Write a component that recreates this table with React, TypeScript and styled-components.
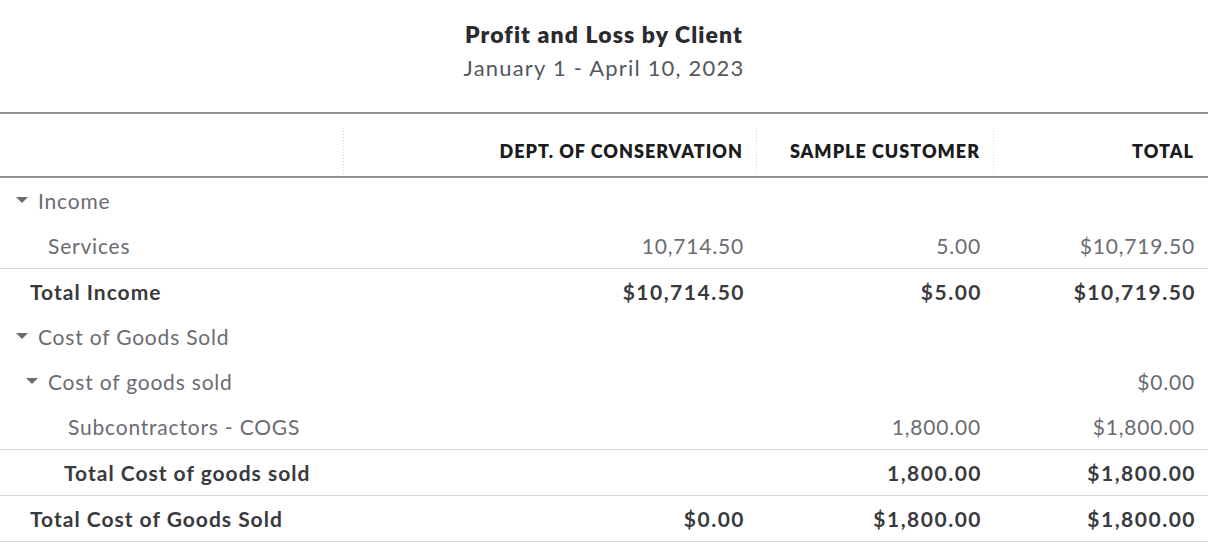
import React from "react";
import styled, { createGlobalStyle } from "styled-components";

const GlobalStyle = createGlobalStyle`
  body {
    margin: 0;
    background: #fff;
    font-family: Lato, "Open Sans", sans-serif;
  }
`;

const Page = styled.div`
  width: 1208px;
  padding-top: 20px;
`;

const Header = styled.div`
  display: flex;
  flex-direction: column;
  align-items: center;
  gap: 6px;
  margin-bottom: 30px;
`;

const Title = styled.h1`
  margin: 0;
  font-size: 23px;
  line-height: 28px;
  font-weight: 800;
  letter-spacing: 1.1px;
  color: #2a2b2e;
`;

const Subtitle = styled.div`
  font-size: 22px;
  line-height: 28px;
  letter-spacing: 1.2px;
  color: #55575c;
`;

const Grid = styled.div`
  display: grid;
  grid-template-columns: 344px 413px 237px 214px;
  border-top: 2px solid #8d9096;
`;

const HeadCell = styled.div<{ $divider?: boolean }>`
  height: 64px;
  box-sizing: border-box;
  padding-top: 12px;
  display: flex;
  align-items: center;
  justify-content: flex-end;
  padding-right: 14px;
  font-size: 18px;
  font-weight: 800;
  letter-spacing: 1px;
  color: #1b1c1e;
  border-bottom: 2px solid #8d9096;
  background-image: ${(p) =>
    p.$divider
      ? "repeating-linear-gradient(to bottom, #d3d6da 0 1px, transparent 1px 3px)"
      : "none"};
  background-size: 1px calc(100% - 14px);
  background-position: right bottom;
  background-repeat: no-repeat;
`;

const Row = styled.div<{ $line?: boolean }>`
  display: contents;
  & > div {
    height: ${(p) => (p.$line ? 45 : 44)}px;
    border-bottom: ${(p) => (p.$line ? "1px solid #d4d7dc" : "1px solid transparent")};
  }
`;

const Label = styled.div<{ $indent: number; $bold?: boolean }>`
  display: flex;
  align-items: center;
  padding-left: ${(p) => p.$indent}px;
  font-size: 21px;
  letter-spacing: ${(p) => (p.$bold ? "1px" : "0.8px")};
  font-weight: ${(p) => (p.$bold ? 700 : 400)};
  color: ${(p) => (p.$bold ? "#393a3d" : "#6b6c72")};
  white-space: nowrap;
`;

const Num = styled.div<{ $bold?: boolean }>`
  display: flex;
  align-items: center;
  justify-content: flex-end;
  padding-right: ${(p) => (p.$bold ? 12 : 13)}px;
  font-size: 21px;
  letter-spacing: ${(p) => (p.$bold ? "1.5px" : "0.8px")};
  font-weight: ${(p) => (p.$bold ? 700 : 400)};
  color: ${(p) => (p.$bold ? "#393a3d" : "#6b6c72")};
`;

const Caret = styled.span`
  width: 0;
  height: 0;
  border-left: 6px solid transparent;
  border-right: 6px solid transparent;
  border-top: 6px solid #6b6c72;
  margin-right: 10px;
`;

type Line = {
  label: string;
  indent: number;
  caret?: boolean;
  bold?: boolean;
  line?: boolean;
  values: string[];
};

const lines: Line[] = [
  { label: "Income", indent: 16, caret: true, values: ["", "", ""] },
  { label: "Services", indent: 48, line: true, values: ["10,714.50", "5.00", "$10,719.50"] },
  { label: "Total Income", indent: 30, bold: true, values: ["$10,714.50", "$5.00", "$10,719.50"] },
  { label: "Cost of Goods Sold", indent: 16, caret: true, values: ["", "", ""] },
  { label: "Cost of goods sold", indent: 26, caret: true, values: ["", "", "$0.00"] },
  { label: "Subcontractors - COGS", indent: 68, line: true, values: ["", "1,800.00", "$1,800.00"] },
  { label: "Total Cost of goods sold", indent: 64, bold: true, line: true, values: ["", "1,800.00", "$1,800.00"] },
  { label: "Total Cost of Goods Sold", indent: 30, bold: true, line: true, values: ["$0.00", "$1,800.00", "$1,800.00"] },
];

export default function App() {
  return (
    <>
      <GlobalStyle />
      <Page>
        <Header>
          <Title>Profit and Loss by Client</Title>
          <Subtitle>January 1 - April 10, 2023</Subtitle>
        </Header>
        <Grid>
          <HeadCell $divider />
          <HeadCell $divider>DEPT. OF CONSERVATION</HeadCell>
          <HeadCell $divider>SAMPLE CUSTOMER</HeadCell>
          <HeadCell>TOTAL</HeadCell>
          {lines.map((l) => (
            <Row key={l.label} $line={l.line}>
              <Label $indent={l.indent} $bold={l.bold}>
                {l.caret && <Caret />}
                {l.label}
              </Label>
              {l.values.map((v, i) => (
                <Num key={i} $bold={l.bold}>
                  {v}
                </Num>
              ))}
            </Row>
          ))}
        </Grid>
      </Page>
    </>
  );
}
